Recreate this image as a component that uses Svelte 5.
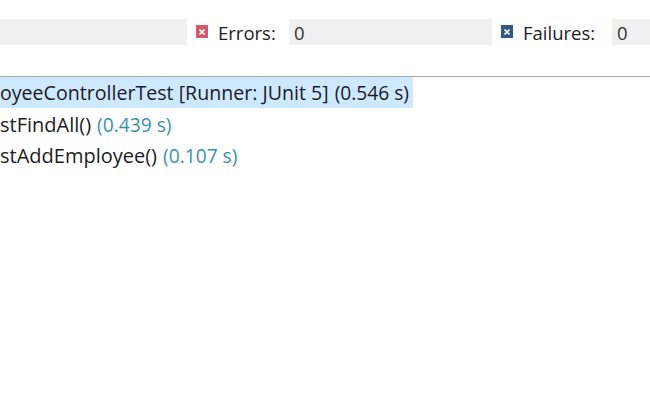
<script>
  const counters = [
    { label: 'Errors:', value: '0', kind: 'err', field: 203 },
    { label: 'Failures:', value: '0', kind: 'fail', field: 120 }
  ];

  const rows = [
    { name: 'oyeeControllerTest [Runner: JUnit 5]', time: '(0.546 s)', top: true },
    { name: 'stFindAll()', time: '(0.439 s)' },
    { name: 'stAddEmployee()', time: '(0.107 s)' }
  ];
</script>

<div class="view">
  <div class="counters">
    <div class="field first"></div>
    {#each counters as c}
      <span class="icon {c.kind}">
        <svg viewBox="0 0 12 12" width="12" height="12" aria-hidden="true">
          <path d="M3.5 3.5 L8.5 8.5 M8.5 3.5 L3.5 8.5" stroke="#fff" stroke-width="1.7" fill="none"/>
        </svg>
      </span>
      <span class="label">{c.label}</span>
      <div class="field value" style="width: {c.field}px">{c.value}</div>
    {/each}
  </div>

  <div class="tree">
    {#each rows as row}
      <div class="row" class:top={row.top}>
        <span class="cell">
          <span class="name">{row.name}</span>
          <span class="time">{row.time}</span>
        </span>
      </div>
    {/each}
  </div>
</div>

<style>
  :global(body) {
    margin: 0;
    background: #fff;
  }

  .view {
    width: 650px;
    height: 400px;
    overflow: hidden;
    font-family: "Open Sans", "Noto Sans", sans-serif;
    color: #1c1c24;
    background: #fff;
  }

  .counters {
    height: 77px;
    box-sizing: border-box;
    padding-top: 19px;
    display: flex;
    align-items: flex-start;
    border-bottom: 1px solid #a8a8a8;
  }

  .field {
    height: 26px;
    background: #f0f0f0;
    flex: none;
    box-sizing: border-box;
  }
  .first { width: 187px; }

  .value {
    padding-left: 5px;
    font-size: 18.5px;
    line-height: 28px;
    color: #333;
  }

  .icon {
    flex: none;
    width: 12px;
    height: 13px;
    margin: 6px 0 0 9px;
    display: flex;
    align-items: center;
  }
  .icon svg { display: block; }
  .err { background: #cf5a6c; }
  .fail { background: #2f5a88; }

  .label {
    flex: none;
    width: 71px;
    margin-left: 10px;
    font-size: 18.5px;
    line-height: 28px;
  }
  .fail + .label { width: 89px; }

  .tree {
    display: flex;
    flex-direction: column;
  }

  .row {
    height: 31.5px;
    display: flex;
    align-items: center;
  }

  .cell {
    height: 31px;
    line-height: 32px;
    font-size: 20px;
    display: flex;
    gap: 6px;
    white-space: pre;
  }
  .top .cell {
    width: 413px;
    box-sizing: border-box;
    background: #cde8ff;
    font-size: 19.6px;
  }

  .time {
    font-size: 19.2px;
    color: #3a93ad;
  }
  .top .time { color: inherit; }
</style>
